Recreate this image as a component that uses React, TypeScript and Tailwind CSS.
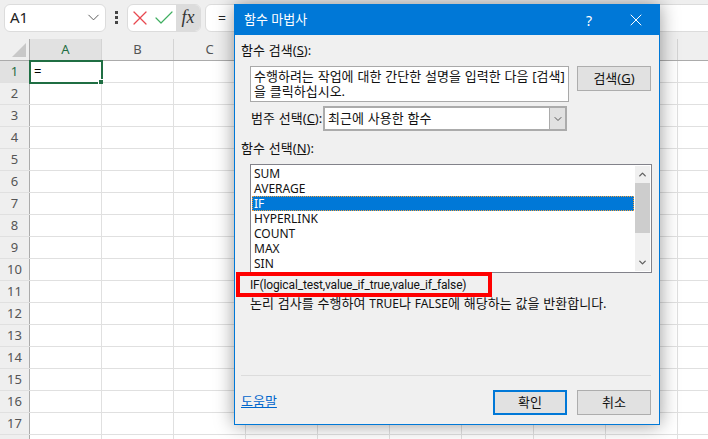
import { Check, ChevronDown, ChevronUp, X } from "lucide-react";

const columns = ["A", "B", "C", "D", "E", "F", "G", "H", "I", ""];
const rows = Array.from({ length: 18 }, (_, i) => i + 1);
const functions = ["SUM", "AVERAGE", "IF", "HYPERLINK", "COUNT", "MAX", "SIN"];

const FONT = "font-['Noto_Sans','Noto_Sans_CJK_KR',sans-serif]";
const CJK = "font-['Noto_Sans_CJK_KR','Noto_Sans',sans-serif]";
const KO = "text-[13px] [word-spacing:0.5px]";

const FormulaBar = () => (
  <div className="flex items-center h-[39px] bg-[#efefef] pl-1 pb-1">
    {/* Name box */}
    <div className="flex items-center justify-between w-[102px] h-[28px] bg-white border border-[#dcdcdc] rounded-md pl-[5px] pr-[2px]">
      <span className="text-[15px] text-[#222]">A1</span>
      <ChevronDown size={19} strokeWidth={1.2} className="text-[#555]" />
    </div>
    <div className="flex flex-col gap-[2px] mx-[9px] w-[3px]">
      <div className="w-[3px] h-[3px] bg-[#444]" />
      <div className="w-[3px] h-[3px] bg-[#444]" />
      <div className="w-[3px] h-[3px] bg-[#444]" />
    </div>
    {/* Cancel / enter / fx */}
    <div className="flex items-center w-[74px] h-[28px] bg-white border border-[#dcdcdc] rounded-md overflow-hidden">
      <div className="flex justify-center w-[24px]">
        <X size={24} strokeWidth={1.2} className="text-[#e8484f]" />
      </div>
      <div className="flex justify-center w-[24px]">
        <Check size={24} strokeWidth={1.2} className="text-[#3fae60]" />
      </div>
      <div className="flex items-center justify-center w-[24px] h-full bg-[#dcdcdc] font-['Liberation_Serif',serif] italic text-[18px] text-[#333]">
        fx
      </div>
    </div>
    {/* Formula input */}
    <div className="flex items-center w-[60px] h-[28px] ml-[4px] bg-white border border-[#dcdcdc] rounded-l-md pl-[12px] text-[14px] text-[#222]">
      =
    </div>
    <div className="flex-1 h-[28px] bg-white border-y border-[#dcdcdc]" />
  </div>
);

const Sheet = () => (
  <div className="relative">
    {/* Column headers */}
    <div className="flex h-[22px] bg-[#efefef] border-b border-[#ababab]">
      <div className="flex items-end justify-end shrink-0 w-[30px] border-r border-[#ababab] pr-[3px] pb-[3px]">
        <svg width="14" height="14" viewBox="0 0 14 14">
          <polygon points="14,0 14,14 0,14" fill="#c8c8c8" />
        </svg>
      </div>
      {columns.map((c, i) => (
        <div
          key={i}
          className={`flex items-center justify-center shrink-0 w-[72px] border-r border-[#d4d4d4] text-[13px] ${
            i === 0 ? "bg-[#e1e1e1] text-[#1f6e43]" : "text-[#555]"
          }`}
        >
          {c}
        </div>
      ))}
    </div>
    {/* Rows */}
    {rows.map((r) => (
      <div key={r} className="flex h-[22px] bg-white border-b border-[#e0e0e0]">
        <div
          className={`flex items-center justify-center shrink-0 w-[30px] border-r border-[#ababab] text-[13px] ${
            r === 1 ? "bg-[#e1e1e1] text-[#1f6e43]" : "bg-[#efefef] text-[#555]"
          }`}
        >
          {r < 18 && r}
        </div>
        {columns.map((c, i) => (
          <div key={i} className="shrink-0 w-[72px] border-r border-[#e0e0e0]" />
        ))}
      </div>
    ))}
    {/* Active cell */}
    <div className="absolute left-[29px] top-[21px] w-[74px] h-[24px] border-2 border-[#1f6e43] flex items-center pl-[3px] text-[13px] text-black">
      =
      <div className="absolute -right-[2px] -bottom-[2px] w-[5px] h-[5px] bg-[#1f6e43] border-l border-t border-white" />
    </div>
  </div>
);

const DialogButton = ({ label, primary }: { label: React.ReactNode; primary?: boolean }) => (
  <button
    className={`flex items-center justify-center w-[74px] h-[25px] bg-[#e1e1e1] text-[13px] text-[#111] ${
      primary ? "border-2 border-[#0078d7]" : "border border-[#adadad]"
    }`}
  >
    {label}
  </button>
);

const Dialog = () => (
  <div className="absolute left-[234px] top-[4px] w-[426px] h-[421px] flex flex-col bg-[#f0f0f0] border border-[#0078d7] shadow-[0_0_18px_rgba(0,0,0,0.4)] text-[12px] text-[#111]">
    {/* Title bar */}
    <div className="flex items-center h-[30px] shrink-0 bg-[#0078d7] text-white pl-[9px]">
      <span className="flex-1 text-[13px]">함수 마법사</span>
      <span className="w-[12px] text-center text-[14px] mr-[31px]">?</span>
      <X size={20} strokeWidth={1.2} className="mr-[13px]" />
    </div>

    <div className="relative flex flex-col flex-1 pl-[6px] pr-[8px]">
      <div className={`h-[17px] mt-[7px] leading-[17px] ${KO}`}>
        함수 검색(<span className="underline">S</span>):
      </div>

      <div className="flex gap-[8px] mt-[7px] ml-[9px]">
        <div
          className={`w-[319px] h-[36px] bg-white border border-[#a9a9a9] px-[3px] leading-[15px] pt-[2px] whitespace-nowrap overflow-hidden ${KO}`}
        >
          수행하려는 작업에 대한 간단한 설명을 입력한 다음 [검색]
          <br />을 클릭하십시오.
        </div>
        <DialogButton
          label={
            <>
              검색(<span className="underline">G</span>)
            </>
          }
        />
      </div>

      <div className="flex items-center mt-[4px] ml-[10px] h-[25px]">
        <span className={`w-[73px] whitespace-nowrap ${KO}`}>
          범주 선택(<span className="underline">C</span>):
        </span>
        <div className="flex items-center w-[244px] h-[25px] -ml-[1px] bg-white border-2 border-[#ababab] pl-[3px]">
          <span className={`flex-1 ${KO}`}>최근에 사용한 함수</span>
          <div className="flex items-center justify-center w-[16px] h-full bg-[#e1e1e1] border-l border-[#ababab]">
            <ChevronDown size={12} className="text-[#555]" />
          </div>
        </div>
      </div>

      <div className={`h-[17px] mt-[9px] leading-[17px] ${KO}`}>
        함수 선택(<span className="underline">N</span>):
      </div>

      <div className="flex w-[402px] h-[109px] mt-[7px] ml-[9px] bg-white border border-[#82828a] p-[1px]">
        <div className="flex-1 pr-[1px]">
          {functions.map((f) => (
            <div
              key={f}
              className={`h-[15px] leading-[15px] pl-[2px] ${
                f === "IF"
                  ? "bg-[#0078d7] text-white outline-1 outline-dotted outline-offset-[-1px] outline-[#f2a03d]"
                  : ""
              }`}
            >
              {f}
            </div>
          ))}
        </div>
        <div className="flex flex-col items-center w-[15px] bg-[#f0f0f0]">
          <div className="flex items-center justify-center h-[17px]">
            <ChevronUp size={11} strokeWidth={3} className="text-[#606060]" />
          </div>
          <div className="w-full h-[50px] bg-[#cdcdcd]" />
          <div className="flex-1" />
          <div className="flex items-center justify-center h-[17px]">
            <ChevronDown size={11} strokeWidth={3} className="text-[#606060]" />
          </div>
        </div>
      </div>

      <div className="h-[17px] mt-[4px] ml-[9px] leading-[17px] tracking-[-0.15px] font-['Roboto',sans-serif]">
        IF(logical_test,value_if_true,value_if_false)
      </div>
      <div className={`h-[17px] mt-[1px] ml-[9px] leading-[17px] whitespace-nowrap ${KO}`}>
        논리 검사를 수행하여 <span className="text-[12px]">TRUE</span>나 <span className="text-[12px]">FALSE</span>에
        해당하는 값을 반환합니다.
      </div>

      <div className="flex-1" />
      <div className="h-px bg-[#dcdcdc]" />

      <div className="flex items-start h-[48px] pt-[14px]">
        <span className={`flex-1 mt-[1px] text-[13px] text-[#0066cc] underline ${CJK}`}>도움말</span>
        <div className="flex gap-[10px]">
          <DialogButton label="확인" primary />
          <DialogButton label="취소" />
        </div>
      </div>
    </div>

    {/* Red highlight */}
    <div className="absolute left-[1px] top-[267px] w-[256px] h-[25px] border-[4px] border-[#ff0000]" />
  </div>
);

export default function App() {
  return (
    <div className={`relative w-[708px] h-[439px] overflow-hidden bg-white ${FONT}`}>
      <FormulaBar />
      <Sheet />
      <Dialog />
    </div>
  );
}
